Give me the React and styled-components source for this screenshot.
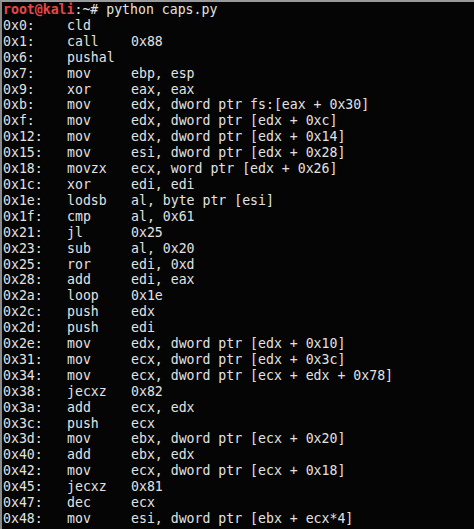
import React from 'react';
import styled, { createGlobalStyle } from 'styled-components';

const GlobalStyle = createGlobalStyle`
  html, body {
    margin: 0;
    padding: 0;
    background: #050505;
  }
`;

const Terminal = styled.div`
  width: 474px;
  height: 529px;
  box-sizing: border-box;
  overflow: hidden;
  background: #050505;
  border-top: 2px solid #9a9a9a;
  border-left: 2px solid #8a8a8a;
  padding: 0 0 0 1px;
  font-family: "DejaVu Sans Mono", "Liberation Mono", monospace;
  font-size: 13.2px;
  line-height: 15.9px;
  color: #e2e2e2;
`;

const Prompt = styled.div`
  white-space: pre;
`;

const User = styled.span`
  color: #e8474a;
  font-weight: bold;
`;

const Row = styled.div`
  display: grid;
  grid-template-columns: 64px 64px auto;
  white-space: pre;
`;

const lines = [
  ['0x0:', 'cld', ''],
  ['0x1:', 'call', '0x88'],
  ['0x6:', 'pushal', ''],
  ['0x7:', 'mov', 'ebp, esp'],
  ['0x9:', 'xor', 'eax, eax'],
  ['0xb:', 'mov', 'edx, dword ptr fs:[eax + 0x30]'],
  ['0xf:', 'mov', 'edx, dword ptr [edx + 0xc]'],
  ['0x12:', 'mov', 'edx, dword ptr [edx + 0x14]'],
  ['0x15:', 'mov', 'esi, dword ptr [edx + 0x28]'],
  ['0x18:', 'movzx', 'ecx, word ptr [edx + 0x26]'],
  ['0x1c:', 'xor', 'edi, edi'],
  ['0x1e:', 'lodsb', 'al, byte ptr [esi]'],
  ['0x1f:', 'cmp', 'al, 0x61'],
  ['0x21:', 'jl', '0x25'],
  ['0x23:', 'sub', 'al, 0x20'],
  ['0x25:', 'ror', 'edi, 0xd'],
  ['0x28:', 'add', 'edi, eax'],
  ['0x2a:', 'loop', '0x1e'],
  ['0x2c:', 'push', 'edx'],
  ['0x2d:', 'push', 'edi'],
  ['0x2e:', 'mov', 'edx, dword ptr [edx + 0x10]'],
  ['0x31:', 'mov', 'ecx, dword ptr [edx + 0x3c]'],
  ['0x34:', 'mov', 'ecx, dword ptr [ecx + edx + 0x78]'],
  ['0x38:', 'jecxz', '0x82'],
  ['0x3a:', 'add', 'ecx, edx'],
  ['0x3c:', 'push', 'ecx'],
  ['0x3d:', 'mov', 'ebx, dword ptr [ecx + 0x20]'],
  ['0x40:', 'add', 'ebx, edx'],
  ['0x42:', 'mov', 'ecx, dword ptr [ecx + 0x18]'],
  ['0x45:', 'jecxz', '0x81'],
  ['0x47:', 'dec', 'ecx'],
  ['0x48:', 'mov', 'esi, dword ptr [ebx + ecx*4]'],
];

export default function App() {
  return (
    <>
      <GlobalStyle />
      <Terminal>
        <Prompt>
          <User>root@kali</User>:~# python caps.py
        </Prompt>
        {lines.map(([addr, op, args]) => (
          <Row key={addr}>
            <span>{addr}</span>
            <span>{op}</span>
            <span>{args}</span>
          </Row>
        ))}
      </Terminal>
    </>
  );
}
